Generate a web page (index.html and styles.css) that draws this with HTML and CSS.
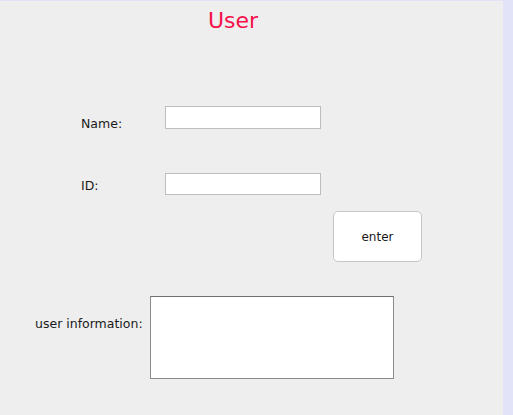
FILE: index.html
```html
<!DOCTYPE html>
<html>
<head>
<meta charset="utf-8">
<title>User</title>
<link rel="stylesheet" href="styles.css">
</head>
<body>
<div class="window">
  <div class="title">User</div>
  <div class="row row-name">
    <label class="label label-name">Name:</label>
    <input class="field field-name" type="text">
  </div>
  <div class="row row-id">
    <label class="label label-id">ID:</label>
    <input class="field field-id" type="text">
  </div>
  <div class="row row-button">
    <button class="enter">enter</button>
  </div>
  <div class="row row-info">
    <label class="label label-info">user information:</label>
    <textarea class="info"></textarea>
  </div>
</div>
</body>
</html>
```

FILE: styles.css
```css
html, body {
  margin: 0;
  padding: 0;
}
body {
  background: #e2e2f9;
  width: 513px;
  height: 415px;
  overflow: hidden;
  font-family: "DejaVu Sans", "Liberation Sans", sans-serif;
  color: #1a1a1a;
}
.window {
  width: 503px;
  height: 414px;
  margin-top: 1px;
  background: #eeeeee;
  overflow: hidden;
}
.title {
  margin-top: 7px;
  padding-left: 208px;
  font-size: 22px;
  line-height: 26px;
  color: #f5104a;
}
.row {
  display: flex;
  align-items: flex-start;
}
.label {
  font-size: 12.5px;
  line-height: 15px;
}
.row-name {
  height: 23px;
  margin-top: 72px;
  padding-left: 81px;
}
.label-name {
  width: 84px;
  padding-top: 10px;
}
.field {
  box-sizing: border-box;
  width: 156px;
  margin: 0;
  border: 1px solid #bdbdbd;
  background: #ffffff;
  outline: none;
  padding: 0 4px;
}
.field-name {
  height: 23px;
}
.row-id {
  height: 22px;
  margin-top: 44px;
  padding-left: 81px;
}
.label-id {
  width: 84px;
  padding-top: 5px;
}
.field-id {
  height: 22px;
}
.row-button {
  margin-top: 16px;
  padding-left: 333px;
}
.enter {
  box-sizing: border-box;
  width: 89px;
  height: 51px;
  margin: 0;
  border: 1px solid #c6c6c6;
  border-radius: 5px;
  background: #ffffff;
  font-family: "DejaVu Sans", "Liberation Sans", sans-serif;
  font-size: 12px;
  color: #1a1a1a;
  padding: 0;
}
.row-info {
  margin-top: 34px;
  padding-left: 35px;
}
.label-info {
  width: 115px;
  padding-top: 20px;
}
.info {
  box-sizing: border-box;
  width: 244px;
  height: 83px;
  margin: 0;
  border: 1px solid #8c8c8c;
  border-top-color: #6f6f6f;
  background: #ffffff;
  resize: none;
  outline: none;
}
```
